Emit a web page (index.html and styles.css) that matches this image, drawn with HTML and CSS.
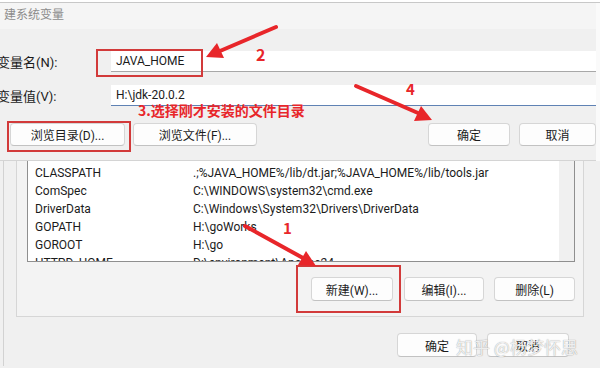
FILE: index.html
```html
<!DOCTYPE html>
<html lang="zh-CN">
<head>
  <meta charset="UTF-8" />
  <meta name="viewport" content="width=device-width, initial-scale=1.0"/>
  <title>新建系统变量</title>
  <link rel="stylesheet" href="styles.css">
</head>
<body>

  <div class="top">
    <div class="prev"></div>
    <div class="newvar">
      <div class="titlebar">建系统变量</div>
      <div class="form">
        <div class="field">
          <label>变量名(N):</label>
          <div class="input">JAVA_HOME</div>
        </div>
        <div class="field">
          <label>变量值(V):</label>
          <div class="input focus">H:\jdk-20.0.2</div>
        </div>
        <div class="actions">
          <div class="btn-group browse">
            <button class="btn w115">浏览目录(D)...</button>
            <button class="btn w124">浏览文件(F)...</button>
          </div>
          <div class="btn-group confirm">
            <button class="btn w82">确定</button>
            <button class="btn w77">取消</button>
          </div>
        </div>
      </div>
    </div>
  </div>

  <div class="env">
    <div class="group">
      <div class="list">
        <div class="rows">
          <div class="row"><span class="name">CLASSPATH</span><span class="value">.;%JAVA_HOME%/lib/dt.jar;%JAVA_HOME%/lib/tools.jar</span></div>
          <div class="row"><span class="name">ComSpec</span><span class="value">C:\WINDOWS\system32\cmd.exe</span></div>
          <div class="row"><span class="name">DriverData</span><span class="value">C:\Windows\System32\Drivers\DriverData</span></div>
          <div class="row"><span class="name">GOPATH</span><span class="value">H:\goWorks</span></div>
          <div class="row"><span class="name">GOROOT</span><span class="value">H:\go</span></div>
          <div class="row"><span class="name">HTTPD_HOME</span><span class="value">D:\environment\Apache24</span></div>
        </div>
        <div class="scroll"></div>
      </div>
      <div class="list-actions">
        <button class="btn w82">新建(W)...</button>
        <button class="btn w80">编辑(I)...</button>
        <button class="btn w81">删除(L)</button>
      </div>
    </div>
    <div class="footer">
      <button class="btn w80">确定</button>
      <button class="btn w82">取消</button>
    </div>
  </div>

  <!-- annotations drawn over the screenshot -->
  <div class="mark box-name"></div>
  <div class="mark box-browse"></div>
  <div class="mark box-new"></div>
  <div class="note n2">2</div>
  <div class="note n4">4</div>
  <div class="note n1">1</div>
  <div class="note tip">3.选择刚才安装的文件目录</div>

  <svg class="arrows" width="600" height="368" viewBox="0 0 600 368">
    <g stroke="#e8262a" stroke-width="4" stroke-linecap="round" fill="#e8262a">
      <line x1="276" y1="27" x2="220" y2="51" />
      <line x1="356" y1="86" x2="418" y2="113" />
      <line x1="245" y1="226" x2="303" y2="258" />
    </g>
    <g fill="#e8262a">
      <polygon points="206,57 224,58 217,43" />
      <polygon points="432,120 414,121 421,106" />
      <polygon points="316,266 298,265 306,251" />
    </g>
  </svg>

  <div class="watermark">知乎 @杨梦怀思</div>

</body>
</html>
```

FILE: styles.css
```css
* { box-sizing: border-box; }

body {
  margin: 0;
  width: 600px;
  height: 368px;
  overflow: hidden;
  background: #f0f0f0;
  font-family: Roboto, "Noto Sans CJK SC", sans-serif;
  font-size: 12px;
  color: #1b1b1b;
  position: relative;
}

.top {
  background: #fafafa;
}

.prev {
  height: 3px;
  background: #fff;
  border-bottom: 1px solid #c8c8c8;
}

.newvar {
  width: 596px;
  background: #f0f0f0;
  border-bottom: 1px solid #d4d4d4;
}

.titlebar {
  height: 26px;
  line-height: 24px;
  padding-left: 4px;
  background: #f5f5f5;
  color: #8c8c8c;
  font-size: 12px;
}

.form {
  padding: 22px 0 14px;
}

.field {
  display: flex;
  align-items: center;
  height: 21px;
}

.field + .field {
  margin-top: 13px;
}

.field label {
  width: 114px;
  margin-left: -3px;
  font-size: 13px;
  color: #1b1b1b;
}

.input {
  flex: 1;
  height: 21px;
  line-height: 20px;
  padding-left: 5px;
  background: #fff;
  border-bottom: 1px solid #a8a8a8;
  font-size: 12px;
}

.input.focus {
  border-bottom-color: #5f82b4;
}

.actions {
  display: flex;
  justify-content: space-between;
  margin-top: 17px;
}

.btn-group {
  display: flex;
}

.browse {
  gap: 8px;
  padding-left: 10px;
}

.confirm {
  gap: 9px;
}

.btn {
  height: 23px;
  padding: 0;
  background: #fdfdfd;
  border: 1px solid #d6d6d6;
  border-bottom-color: #c2c2c2;
  border-radius: 4px;
  font-family: Roboto, "Noto Sans CJK SC", sans-serif;
  font-size: 12px;
  color: #1b1b1b;
}

.w115 { width: 115px; }
.w124 { width: 124px; }
.w82 { width: 82px; }
.w81 { width: 81px; }
.w80 { width: 80px; }
.w77 { width: 77px; }

.env {
  margin-left: 3px;
  padding-left: 12px;
  border-left: 1px solid #d2d2d2;
  height: 205px;
}

.group {
  width: 568px;
  border: 1px solid #d6d6d6;
  border-top: none;
  padding: 0 8px 15px 10px;
  background: #f3f3f3;
}

.list {
  display: flex;
  height: 101px;
  background: #fff;
  border: 1px solid #8f8f8f;
  border-top: none;
  overflow: hidden;
}

.rows {
  flex: 1;
  padding: 3px 0 0 7px;
}

.row {
  display: flex;
  height: 18px;
  line-height: 18px;
  white-space: nowrap;
}

.name {
  width: 158px;
}

.scroll {
  width: 15px;
  background: #f0f0f0;
}

.list-actions {
  display: flex;
  justify-content: flex-end;
  gap: 11px;
  margin-top: 15px;
}

.list-actions .btn,
.footer .btn {
  height: 24px;
}

.list-actions .btn + .btn + .btn {
  margin-left: -1px;
}

.footer {
  display: flex;
  justify-content: flex-end;
  gap: 10px;
  width: 553px;
  margin-top: 16px;
}

.mark {
  position: absolute;
  border: 2px solid #d23a3a;
}

.box-name { left: 96px; top: 49px; width: 107px; height: 28px; }
.box-browse { left: 7px; top: 121px; width: 124px; height: 31px; }
.box-new { left: 296px; top: 265px; width: 105px; height: 48px; }

.note {
  position: absolute;
  color: #e8262a;
  font-family: "Noto Sans CJK SC", sans-serif;
  font-weight: bold;
  line-height: 1;
}

.n2 { left: 256px; top: 46px; font-size: 16px; }
.n4 { left: 406px; top: 81px; font-size: 15px; }
.n1 { left: 283px; top: 220px; font-size: 15px; }
.tip { left: 138px; top: 103px; font-size: 14px; }

.arrows {
  position: absolute;
  left: 0;
  top: 0;
}

.watermark {
  position: absolute;
  left: 456px;
  top: 334px;
  font-family: "Noto Sans CJK SC", sans-serif;
  font-size: 17px;
  color: rgba(255, 255, 255, 0.85);
  text-shadow: 0 0 1px rgba(0, 0, 0, 0.45);
  white-space: nowrap;
}
```
